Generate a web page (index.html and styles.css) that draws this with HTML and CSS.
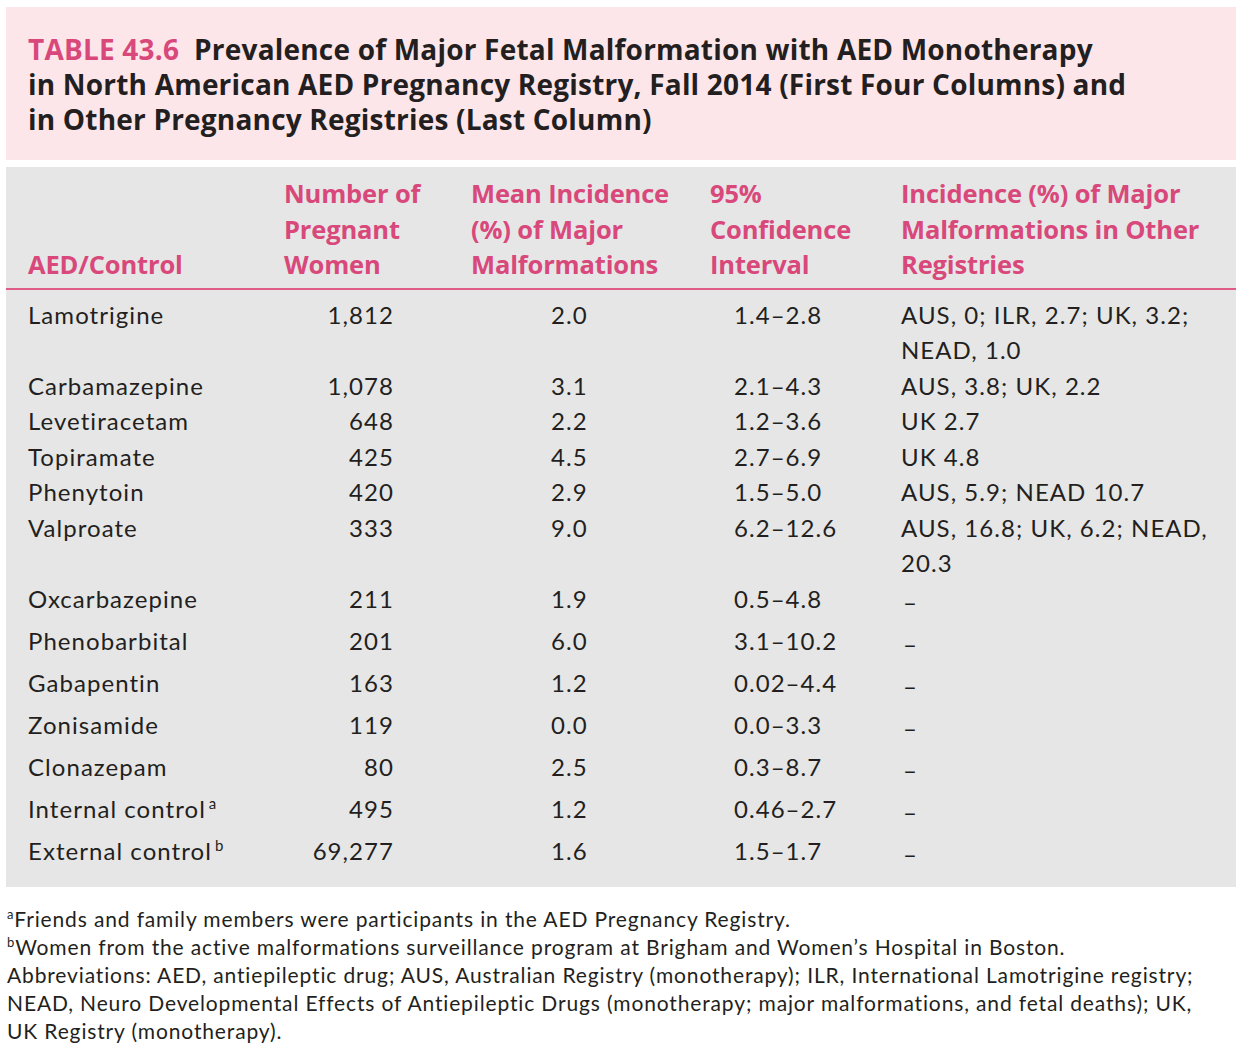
FILE: index.html
```html
<!DOCTYPE html>
<html lang="en">
<head>
<meta charset="utf-8">
<title>Table 43.6</title>
<link rel="stylesheet" href="styles.css">
</head>
<body>
<div class="page">
  <div class="caption">
    <span class="tnum">TABLE 43.6</span>&nbsp; Prevalence of Major Fetal Malformation with AED Monotherapy<br>
    in North American AED Pregnancy Registry, Fall 2014 (First Four Columns) and<br>
    in Other Pregnancy Registries (Last Column)
  </div>
  <div class="tablebox">
    <table class="data">
      <colgroup>
        <col class="c1"><col class="c2"><col class="c3"><col class="c4"><col class="c5">
      </colgroup>
      <thead>
        <tr>
          <th class="h1">AED/Control</th>
          <th>Number of<br>Pregnant<br>Women</th>
          <th>Mean Incidence<br>(%) of Major<br>Malformations</th>
          <th>95%<br>Confidence<br>Interval</th>
          <th>Incidence (%) of Major<br>Malformations in Other<br>Registries</th>
        </tr>
      </thead>
      <tbody>
        <tr class="first"><td class="name">Lamotrigine</td><td class="num">1,812</td><td class="mean">2.0</td><td class="ci">1.4–2.8</td><td class="other">AUS, 0; ILR, 2.7; UK, 3.2;<br>NEAD, 1.0</td></tr>
        <tr><td class="name">Carbamazepine</td><td class="num">1,078</td><td class="mean">3.1</td><td class="ci">2.1–4.3</td><td class="other">AUS, 3.8; UK, 2.2</td></tr>
        <tr><td class="name">Levetiracetam</td><td class="num">648</td><td class="mean">2.2</td><td class="ci">1.2–3.6</td><td class="other">UK 2.7</td></tr>
        <tr><td class="name">Topiramate</td><td class="num">425</td><td class="mean">4.5</td><td class="ci">2.7–6.9</td><td class="other">UK 4.8</td></tr>
        <tr><td class="name">Phenytoin</td><td class="num">420</td><td class="mean">2.9</td><td class="ci">1.5–5.0</td><td class="other">AUS, 5.9; NEAD 10.7</td></tr>
        <tr><td class="name">Valproate</td><td class="num">333</td><td class="mean">9.0</td><td class="ci">6.2–12.6</td><td class="other">AUS, 16.8; UK, 6.2; NEAD,<br>20.3</td></tr>
        <tr class="tall"><td class="name">Oxcarbazepine</td><td class="num">211</td><td class="mean">1.9</td><td class="ci">0.5–4.8</td><td class="other"><span class="dash">–</span></td></tr>
        <tr class="tall"><td class="name">Phenobarbital</td><td class="num">201</td><td class="mean">6.0</td><td class="ci">3.1–10.2</td><td class="other"><span class="dash">–</span></td></tr>
        <tr class="tall"><td class="name">Gabapentin</td><td class="num">163</td><td class="mean">1.2</td><td class="ci">0.02–4.4</td><td class="other"><span class="dash">–</span></td></tr>
        <tr class="tall"><td class="name">Zonisamide</td><td class="num">119</td><td class="mean">0.0</td><td class="ci">0.0–3.3</td><td class="other"><span class="dash">–</span></td></tr>
        <tr class="tall"><td class="name">Clonazepam</td><td class="num">80</td><td class="mean">2.5</td><td class="ci">0.3–8.7</td><td class="other"><span class="dash">–</span></td></tr>
        <tr class="tall"><td class="name">Internal control<sup class="mark">a</sup></td><td class="num">495</td><td class="mean">1.2</td><td class="ci">0.46–2.7</td><td class="other"><span class="dash">–</span></td></tr>
        <tr class="tall last"><td class="name">External control<sup class="mark">b</sup></td><td class="num">69,277</td><td class="mean">1.6</td><td class="ci">1.5–1.7</td><td class="other"><span class="dash">–</span></td></tr>
      </tbody>
    </table>
  </div>
  <div class="notes">
    <p><sup>a</sup>Friends and family members were participants in the AED Pregnancy Registry.</p>
    <p><sup>b</sup>Women from the active malformations surveillance program at Brigham and Women’s Hospital in Boston.</p>
    <p>Abbreviations: AED, antiepileptic drug; AUS, Australian Registry (monotherapy); ILR, International Lamotrigine registry;<br>NEAD, Neuro Developmental Effects of Antiepileptic Drugs (monotherapy; major malformations, and fetal deaths); UK,<br>UK Registry (monotherapy).</p>
  </div>
</div>
</body>
</html>
```

FILE: styles.css
```css
html, body {
  margin: 0;
  padding: 0;
  background: #ffffff;
}
.page {
  padding: 7px 7px 0 6px;
  width: 1230px;
  color: #231f20;
}
.caption {
  background: #fde6ea;
  padding: 25px 10px 23px 22px;
  font-family: "Open Sans", "Lato", sans-serif;
  font-weight: 700;
  font-size: 28px;
  line-height: 35px;
  letter-spacing: 0.2px;
  color: #231f20;
  white-space: nowrap;
}
.tnum {
  color: #d9487b;
}
.tablebox {
  margin-top: 7px;
  background: #e6e6e6;
  padding-bottom: 12px;
}
.data {
  width: 100%;
  border-collapse: collapse;
  table-layout: fixed;
  font-family: "Lato", "Open Sans", sans-serif;
  font-size: 24px;
  letter-spacing: 1.05px;
  color: #231f20;
}
.c1 { width: 278px; }
.c2 { width: 187px; }
.c3 { width: 239px; }
.c4 { width: 191px; }
.c5 { width: auto; }
.data th {
  text-align: left;
  vertical-align: bottom;
  font-family: "Open Sans", "Lato", sans-serif;
  font-weight: 700;
  font-size: 25.5px;
  letter-spacing: -0.15px;
  line-height: 35.5px;
  color: #d9487b;
  padding: 9px 0 5px 0;
  border-bottom: 2px solid #df5c86;
  white-space: nowrap;
}
.data th.h1 {
  padding-left: 22px;
}
.data td {
  vertical-align: top;
  line-height: 35.5px;
  padding: 0;
  white-space: nowrap;
}
.data tr.first td {
  padding-top: 7px;
}
.data tr.tall td {
  padding-bottom: 6.5px;
}
.name {
  padding-left: 22px !important;
}
.num {
  text-align: right;
  padding-right: 77px !important;
}
.mean {
  padding-left: 80px !important;
}
.ci {
  padding-left: 24px !important;
}
.dash {
  position: relative;
  top: 3px;
  padding-left: 2px;
}
.mark {
  font-size: 15px;
  line-height: 0;
  vertical-align: 9px;
  margin-left: 3px;
}
.notes {
  margin-top: 18px;
  padding-left: 1px;
  font-family: "Lato", "Open Sans", sans-serif;
  font-size: 21px;
  letter-spacing: 0.86px;
  line-height: 28px;
  color: #231f20;
  white-space: nowrap;
}
.notes p {
  margin: 0;
}
.notes sup {
  font-size: 13px;
  line-height: 0;
  vertical-align: 8px;
}
```
